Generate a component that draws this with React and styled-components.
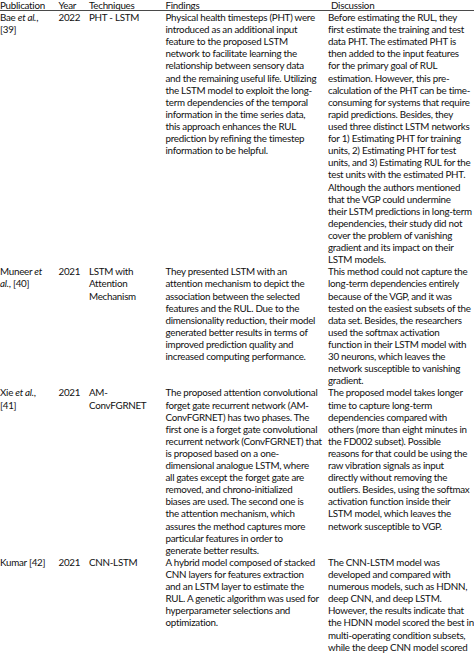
import React from "react";
import styled, { createGlobalStyle } from "styled-components";

const Global = createGlobalStyle`
  html, body { margin: 0; padding: 0; background: #ffffff; }
  body { width: 474px; height: 654px; overflow: hidden; }
`;

const Page = styled.div`
  width: 474px;
  height: 654px;
  overflow: hidden;
  background: #ffffff;
  font-family: Lato, "Open Sans", sans-serif;
  font-size: 9.8px;
  letter-spacing: -0.26px;
  color: #111111;
`;

const Table = styled.div`
  display: grid;
  grid-template-columns: 58.5px 30.5px 76.5px 162.5px 220px;
  width: 548px;
`;

const HeadCell = styled.div`
  line-height: 10px;
  height: 10px;
  white-space: nowrap;
  padding-left: ${(p) => p.$indent || 0}px;
`;

const Rule = styled.div`
  grid-column: 1 / -1;
  height: 1px;
  background: #4a4a4a;
`;

const Cell = styled.div`
  line-height: 12.12px;
  white-space: nowrap;
  padding-left: ${(p) => p.$indent || 0}px;
`;

const Line = styled.div`
  height: 12.12px;
`;

const rows = [
  {
    pub: [
      <>Bae <i>et al.</i>,</>,
      "[39]",
    ],
    year: "2022",
    tech: ["PHT - LSTM"],
    findings: [
      "Physical health timesteps (PHT) were",
      "introduced as an additional input",
      "feature to the proposed LSTM",
      "network to facilitate learning the",
      "relationship between sensory data",
      "and the remaining useful life. Utilizing",
      "the LSTM model to exploit the long-",
      "term dependencies of the temporal",
      "information in the time series data,",
      "this approach enhances the RUL",
      "prediction by refining the timestep",
      "information to be helpful.",
    ],
    discussion: [
      "Before estimating the RUL, they",
      "first estimate the training and test",
      "data PHT. The estimated PHT is",
      "then added to the input features",
      "for the primary goal of RUL",
      "estimation. However, this pre-",
      "calculation of the PHT can be time-",
      "consuming for systems that require",
      "rapid predictions. Besides, they",
      "used three distinct LSTM networks",
      "for 1) Estimating PHT for training",
      "units, 2) Estimating PHT for test",
      "units, and 3) Estimating RUL for the",
      "test units with the estimated PHT.",
      "Although the authors mentioned",
      "that the VGP could undermine",
      "their LSTM predictions in long-term",
      "dependencies, their study did not",
      "cover the problem of vanishing",
      "gradient and its impact on their",
      "LSTM models.",
    ],
  },
  {
    pub: [
      <>Muneer <i>et</i></>,
      <><i>al.</i>, [40]</>,
    ],
    year: "2021",
    tech: ["LSTM with", "Attention", "Mechanism"],
    findings: [
      "They presented LSTM with an",
      "attention mechanism to depict the",
      "association between the selected",
      "features and the RUL. Due to the",
      "dimensionality reduction, their model",
      "generated better results in terms of",
      "improved prediction quality and",
      "increased computing performance.",
    ],
    discussion: [
      "This method could not capture the",
      "long-term dependencies entirely",
      "because of the VGP, and it was",
      "tested on the easiest subsets of the",
      "data set. Besides, the researchers",
      "used the softmax activation",
      "function in their LSTM model with",
      "30 neurons, which leaves the",
      "network susceptible to vanishing",
      "gradient.",
    ],
  },
  {
    pub: [
      <>Xie <i>et al.</i>,</>,
      "[41]",
    ],
    year: "2021",
    tech: ["AM-", "ConvFGRNET"],
    findings: [
      "The proposed attention convolutional",
      "forget gate recurrent network (AM-",
      "ConvFGRNET) has two phases. The",
      "first one is a forget gate convolutional",
      "recurrent network (ConvFGRNET) that",
      "is proposed based on a one-",
      "dimensional analogue LSTM, where",
      "all gates except the forget gate are",
      "removed, and chrono-initialized",
      "biases are used. The second one is",
      "the attention mechanism, which",
      "assures the method captures more",
      "particular features in order to",
      "generate better results.",
    ],
    discussion: [
      "The proposed model takes longer",
      "time to capture long-term",
      "dependencies compared with",
      "others (more than eight minutes in",
      "the FD002 subset). Possible",
      "reasons for that could be using the",
      "raw vibration signals as input",
      "directly without removing the",
      "outliers. Besides, using the softmax",
      "activation function inside their",
      "LSTM model, which leaves the",
      "network susceptible to VGP.",
    ],
  },
  {
    pub: ["Kumar [42]"],
    year: "2021",
    tech: ["CNN-LSTM"],
    findings: [
      "A hybrid model composed of stacked",
      "CNN layers for features extraction",
      "and an LSTM layer to estimate the",
      "RUL. A genetic algorithm was used for",
      "hyperparameter selections and",
      "optimization.",
    ],
    discussion: [
      "The CNN-LSTM model was",
      "developed and compared with",
      "numerous models, such as HDNN,",
      "deep CNN, and deep LSTM.",
      "However, the results indicate that",
      "the HDNN model scored the best in",
      "multi-operating condition subsets,",
      "while the deep CNN model scored",
    ],
  },
];

const Lines = ({ items }) => (
  <>
    {items.map((t, i) => (
      <Line key={i}>{t}</Line>
    ))}
  </>
);

export default function App() {
  return (
    <Page>
      <Global />
      <Table>
        <HeadCell>Publication</HeadCell>
        <HeadCell>Year</HeadCell>
        <HeadCell>Techniques</HeadCell>
        <HeadCell>Findings</HeadCell>
        <HeadCell $indent={3}>Discussion</HeadCell>
        <Rule />
        {rows.map((r, i) => (
          <React.Fragment key={i}>
            <Cell>
              <Lines items={r.pub} />
            </Cell>
            <Cell>
              <Lines items={[r.year]} />
            </Cell>
            <Cell>
              <Lines items={r.tech} />
            </Cell>
            <Cell>
              <Lines items={r.findings} />
            </Cell>
            <Cell>
              <Lines items={r.discussion} />
            </Cell>
          </React.Fragment>
        ))}
      </Table>
    </Page>
  );
}
